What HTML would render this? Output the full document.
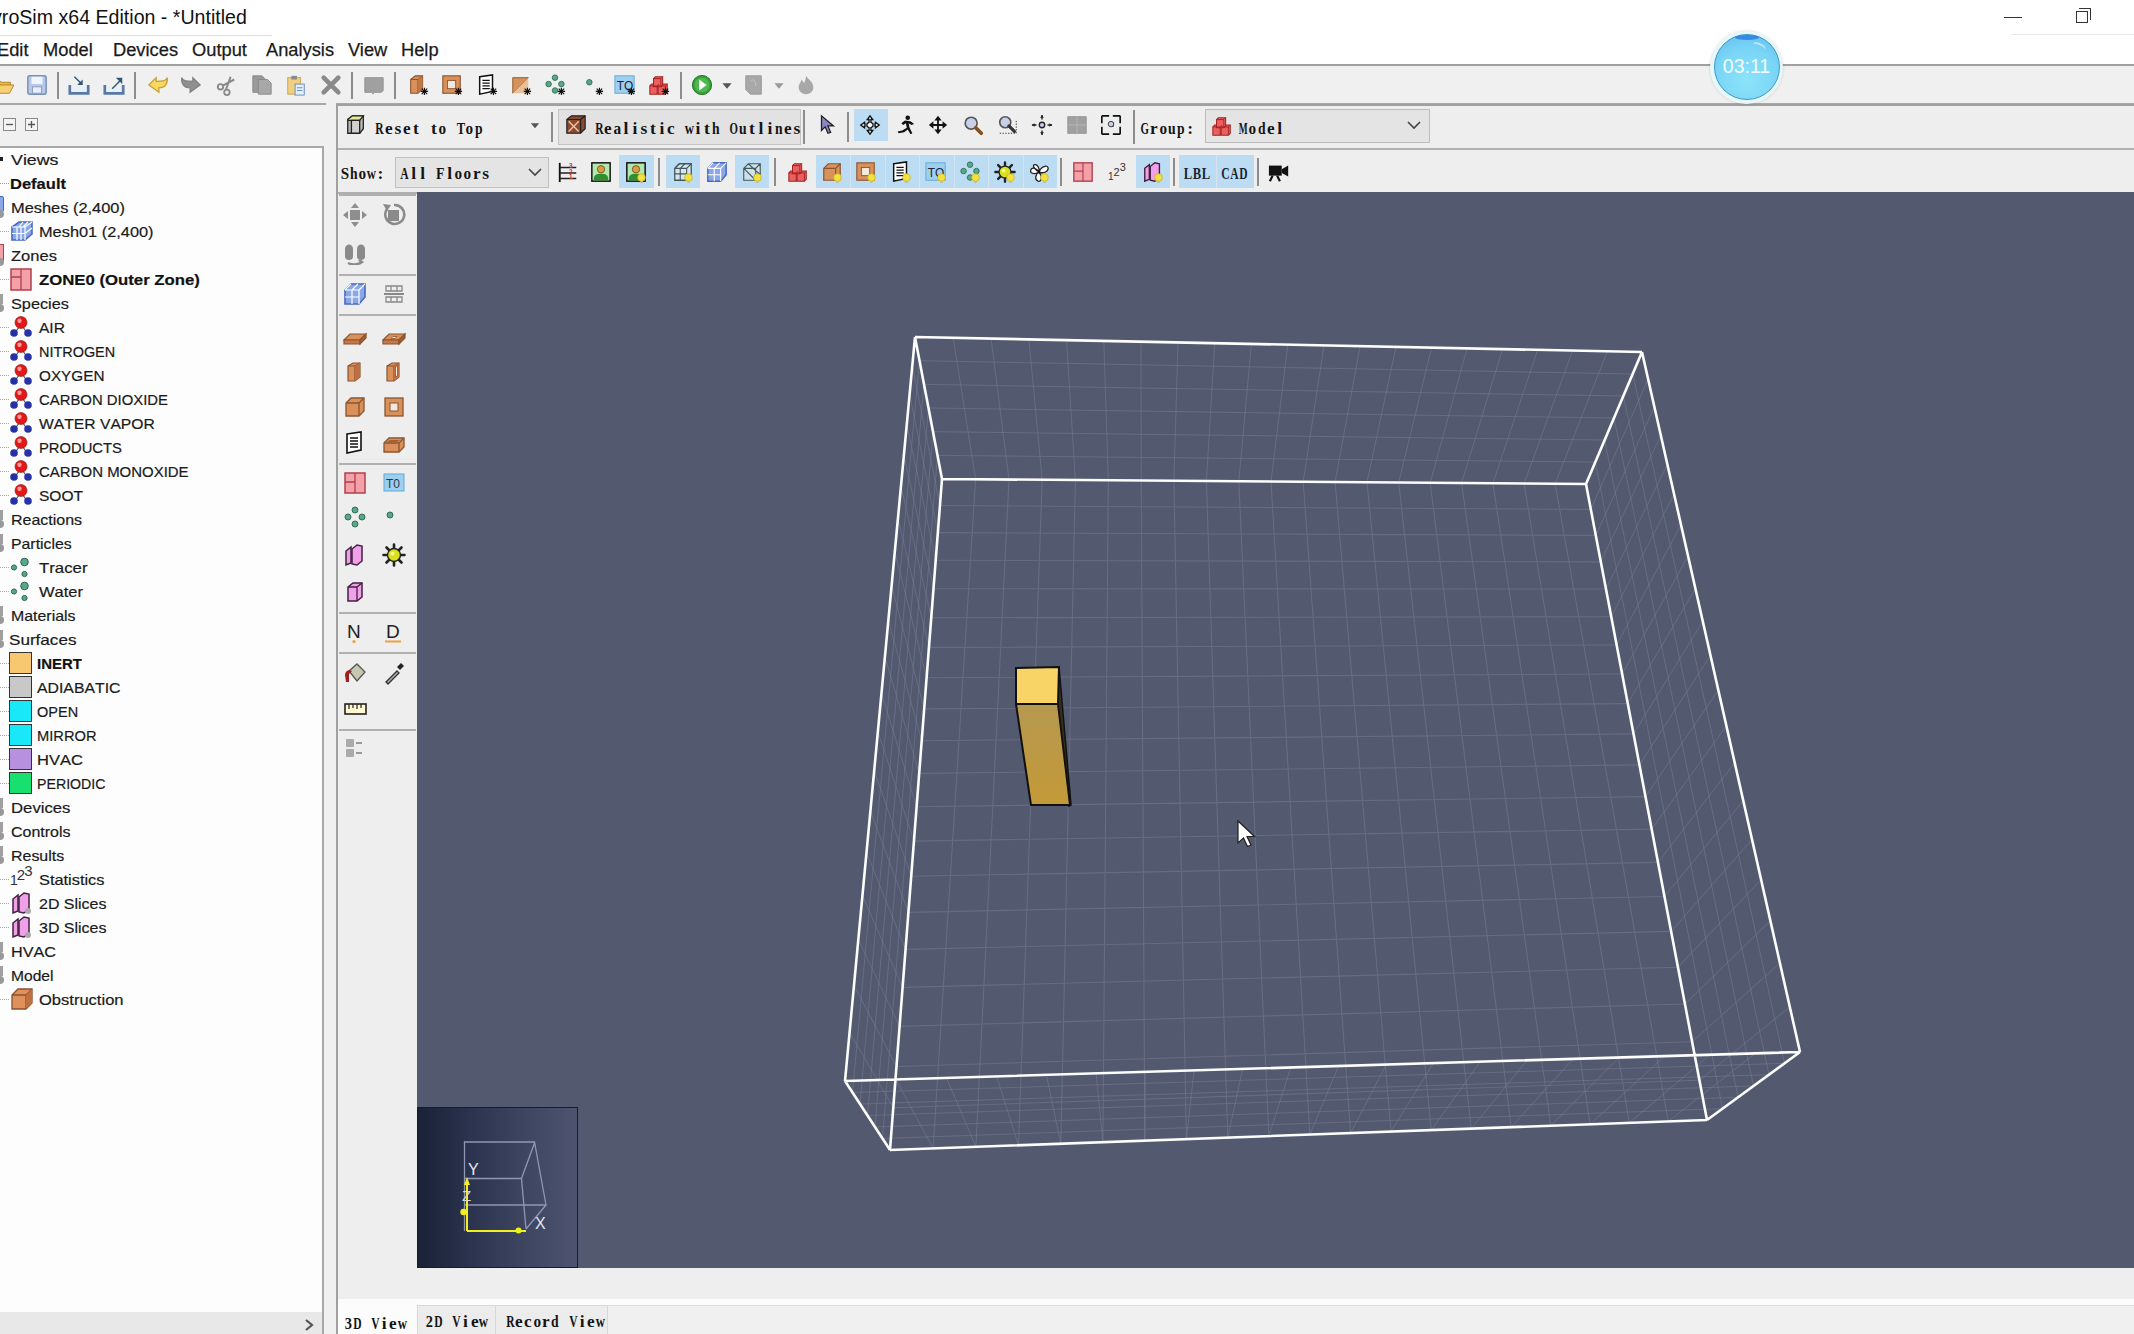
<!DOCTYPE html>
<html><head><meta charset="utf-8">
<style>
*{margin:0;padding:0;box-sizing:border-box}
html,body{width:2134px;height:1334px;overflow:hidden;background:#f0f0f0;font-family:"Liberation Sans",sans-serif;color:#000}
.a{position:absolute}
#title{left:0;top:0;width:2134px;height:35px;background:#fff}
#menu{left:0;top:35px;width:2134px;height:29px;background:#fff}
#tb1{left:0;top:64px;width:2134px;height:41px;background:#f0f0f0;border-top:2px solid #a0a0a0;border-bottom:2px solid #a9a9a9}
.mi{position:absolute;top:39px;font-size:18.3px;color:#1a1a1a;-webkit-text-stroke:0.25px #1a1a1a}
#lp{left:0;top:105px;width:325px;height:1229px;background:#f0f0f0}
#tree{left:0;top:146px;width:324px;height:1166px;background:#fdfdfd;border-top:2px solid #a8a8a8;border-right:2px solid #a8a8a8}
.tr{position:absolute;font-size:15px;color:#1a1a1a;white-space:nowrap;line-height:17px;transform-origin:0 0;font-kerning:none;-webkit-text-stroke:0.2px #1a1a1a}
.b{font-weight:bold;color:#111}
#rp{left:336px;top:104px;width:1798px;height:1230px;background:#eeeeee;border-left:2px solid #a0a0a0;border-top:2px solid #a0a0a0}
#view{left:417px;top:192px;width:1717px;height:1076px;background:#53596f;overflow:hidden}
.sim{font-family:"Liberation Serif",serif;font-weight:bold;font-size:17.5px;line-height:20px;white-space:nowrap}
.sim .c{display:inline-block;width:9px;text-align:center}
.sim i{display:inline-block;font-style:normal;margin:0 -20px}
.tl{font-size:18px;transform:scaleX(0.84);transform-origin:0 0;line-height:20px;margin-top:4px;margin-left:3px}
.mono{font-family:"Liberation Mono",monospace;font-weight:normal;color:#111;white-space:nowrap;-webkit-text-stroke:0.35px #111}
</style></head><body>
<div id="title" class="a">
 <div class="a" style="left:-21px;top:6px;font-size:19.6px;color:#111;white-space:nowrap">PyroSim x64 Edition - *Untitled</div>
 <div class="a" style="left:2004px;top:17px;width:18px;height:1px;background:#333"></div>
 <div class="a" style="left:2076px;top:11px;width:12px;height:12px;border:1px solid #333"></div>
 <div class="a" style="left:2079px;top:8px;width:12px;height:12px;border-top:1px solid #333;border-right:1px solid #333"></div>
 <div class="a" style="left:2012px;top:34px;width:122px;height:1px;background:#e8e8e8"></div>
</div>
<div id="menu" class="a"></div>
<div class="a" style="left:0;top:35px;width:272px;height:1px;background:#e0e0e0"></div>
<div class="mi" style="left:-3px">Edit</div>
<div class="mi" style="left:43px">Model</div>
<div class="mi" style="left:113px">Devices</div>
<div class="mi" style="left:192px">Output</div>
<div class="mi" style="left:266px">Analysis</div>
<div class="mi" style="left:348px">View</div>
<div class="mi" style="left:401px">Help</div>
<div id="tb1" class="a"></div>

<div id="lp" class="a"></div>
<div class="a" style="left:326px;top:102px;width:10px;height:4px;background:#f0f0f0"></div>
<div id="tree" class="a"></div>
<div class="tr" style="left:11px;top:151px;transform:scaleX(1.187)">Views</div>
<div class="a" style="left:0;top:157px;width:3px;height:4px;background:#222"></div>
<div class="tr b" style="left:10px;top:175px;transform:scaleX(1.101)">Default</div>
<div class="a" style="left:0;top:183px;width:9px;border-top:1px dotted #999"></div>
<div class="tr" style="left:11px;top:199px;transform:scaleX(1.093)">Meshes (2,400)</div>
<div class="a" style="left:-6px;top:196px;width:10px;height:16px;background:#8aa8e8;border:1.5px solid #4868c0;border-radius:2px"></div><div class="a" style="left:-4px;top:210px;width:8px;height:8px;border-radius:50%;background:#999"></div>
<div class="tr" style="left:39px;top:223px;transform:scaleX(1.090)">Mesh01 (2,400)</div>
<div class="a" style="left:0;top:231px;width:9px;border-top:1px dotted #aaa"></div>
<svg class="a" style="left:10px;top:219px" width="24" height="23" viewBox="0 0 24 23"><path d="M2 8L9 3L22 3L22 15L15 21L2 21Z" fill="#8aa8e8" stroke="#4868c0" stroke-width="1.6"/><path d="M2 8L15 8L22 3M15 8L15 21M2 14.5L15 14.5L22 9M7 8L7 21M11 8L11 21M6 3L2 6M13 3L9 8M18 3L13 8" stroke="#fff" stroke-width="1.2" fill="none"/></svg>
<div class="tr" style="left:11px;top:247px;transform:scaleX(1.101)">Zones</div>
<div class="a" style="left:-6px;top:244px;width:10px;height:17px;background:#f4a0a8;border:1.5px solid #b04050"></div><div class="a" style="left:-4px;top:258px;width:8px;height:8px;border-radius:50%;background:#999"></div>
<div class="tr b" style="left:39px;top:271px;transform:scaleX(1.116)">ZONE0 (Outer Zone)</div>
<div class="a" style="left:0;top:279px;width:9px;border-top:1px dotted #aaa"></div>
<svg class="a" style="left:10px;top:268px" width="22" height="23" viewBox="0 0 22 23"><rect x="1" y="1" width="20" height="21" fill="#f4a0a8" stroke="#b04050" stroke-width="1.5"/><path d="M11 1V22M1 9H11" stroke="#b04050" stroke-width="1.3"/></svg>
<div class="tr" style="left:11px;top:295px;transform:scaleX(1.085)">Species</div>
<div class="a" style="left:-4px;top:304px;width:8px;height:8px;border-radius:50%;background:#999"></div><div class="a" style="left:0;top:294px;width:3px;height:10px;background:#777;opacity:.7"></div>
<div class="tr" style="left:39px;top:319px;transform:scaleX(1.035)">AIR</div>
<div class="a" style="left:0;top:327px;width:9px;border-top:1px dotted #aaa"></div>
<svg class="a" style="left:9px;top:316px" width="24" height="22" viewBox="0 0 24 22"><path d="M12 8L6 17M12 8L18 17" stroke="#556" stroke-width="1.2"/><circle cx="12" cy="6.5" r="6" fill="#e01818" stroke="#901010" stroke-width=".6"/><circle cx="10.5" cy="4.8" r="2.2" fill="#ff9a9a"/><circle cx="5" cy="17" r="3.8" fill="#2830a8"/><circle cx="19" cy="17" r="3.8" fill="#2830a8"/></svg>
<div class="tr" style="left:39px;top:343px;transform:scaleX(0.962)">NITROGEN</div>
<div class="a" style="left:0;top:351px;width:9px;border-top:1px dotted #aaa"></div>
<svg class="a" style="left:9px;top:340px" width="24" height="22" viewBox="0 0 24 22"><path d="M12 8L6 17M12 8L18 17" stroke="#556" stroke-width="1.2"/><circle cx="12" cy="6.5" r="6" fill="#e01818" stroke="#901010" stroke-width=".6"/><circle cx="10.5" cy="4.8" r="2.2" fill="#ff9a9a"/><circle cx="5" cy="17" r="3.8" fill="#2830a8"/><circle cx="19" cy="17" r="3.8" fill="#2830a8"/></svg>
<div class="tr" style="left:39px;top:367px;transform:scaleX(1.020)">OXYGEN</div>
<div class="a" style="left:0;top:375px;width:9px;border-top:1px dotted #aaa"></div>
<svg class="a" style="left:9px;top:364px" width="24" height="22" viewBox="0 0 24 22"><path d="M12 8L6 17M12 8L18 17" stroke="#556" stroke-width="1.2"/><circle cx="12" cy="6.5" r="6" fill="#e01818" stroke="#901010" stroke-width=".6"/><circle cx="10.5" cy="4.8" r="2.2" fill="#ff9a9a"/><circle cx="5" cy="17" r="3.8" fill="#2830a8"/><circle cx="19" cy="17" r="3.8" fill="#2830a8"/></svg>
<div class="tr" style="left:39px;top:391px;transform:scaleX(0.992)">CARBON DIOXIDE</div>
<div class="a" style="left:0;top:399px;width:9px;border-top:1px dotted #aaa"></div>
<svg class="a" style="left:9px;top:388px" width="24" height="22" viewBox="0 0 24 22"><path d="M12 8L6 17M12 8L18 17" stroke="#556" stroke-width="1.2"/><circle cx="12" cy="6.5" r="6" fill="#e01818" stroke="#901010" stroke-width=".6"/><circle cx="10.5" cy="4.8" r="2.2" fill="#ff9a9a"/><circle cx="5" cy="17" r="3.8" fill="#2830a8"/><circle cx="19" cy="17" r="3.8" fill="#2830a8"/></svg>
<div class="tr" style="left:39px;top:415px;transform:scaleX(1.045)">WATER VAPOR</div>
<div class="a" style="left:0;top:423px;width:9px;border-top:1px dotted #aaa"></div>
<svg class="a" style="left:9px;top:412px" width="24" height="22" viewBox="0 0 24 22"><path d="M12 8L6 17M12 8L18 17" stroke="#556" stroke-width="1.2"/><circle cx="12" cy="6.5" r="6" fill="#e01818" stroke="#901010" stroke-width=".6"/><circle cx="10.5" cy="4.8" r="2.2" fill="#ff9a9a"/><circle cx="5" cy="17" r="3.8" fill="#2830a8"/><circle cx="19" cy="17" r="3.8" fill="#2830a8"/></svg>
<div class="tr" style="left:39px;top:439px;transform:scaleX(0.984)">PRODUCTS</div>
<div class="a" style="left:0;top:447px;width:9px;border-top:1px dotted #aaa"></div>
<svg class="a" style="left:9px;top:436px" width="24" height="22" viewBox="0 0 24 22"><path d="M12 8L6 17M12 8L18 17" stroke="#556" stroke-width="1.2"/><circle cx="12" cy="6.5" r="6" fill="#e01818" stroke="#901010" stroke-width=".6"/><circle cx="10.5" cy="4.8" r="2.2" fill="#ff9a9a"/><circle cx="5" cy="17" r="3.8" fill="#2830a8"/><circle cx="19" cy="17" r="3.8" fill="#2830a8"/></svg>
<div class="tr" style="left:39px;top:463px;transform:scaleX(0.997)">CARBON MONOXIDE</div>
<div class="a" style="left:0;top:471px;width:9px;border-top:1px dotted #aaa"></div>
<svg class="a" style="left:9px;top:460px" width="24" height="22" viewBox="0 0 24 22"><path d="M12 8L6 17M12 8L18 17" stroke="#556" stroke-width="1.2"/><circle cx="12" cy="6.5" r="6" fill="#e01818" stroke="#901010" stroke-width=".6"/><circle cx="10.5" cy="4.8" r="2.2" fill="#ff9a9a"/><circle cx="5" cy="17" r="3.8" fill="#2830a8"/><circle cx="19" cy="17" r="3.8" fill="#2830a8"/></svg>
<div class="tr" style="left:39px;top:487px;transform:scaleX(1.035)">SOOT</div>
<div class="a" style="left:0;top:495px;width:9px;border-top:1px dotted #aaa"></div>
<svg class="a" style="left:9px;top:484px" width="24" height="22" viewBox="0 0 24 22"><path d="M12 8L6 17M12 8L18 17" stroke="#556" stroke-width="1.2"/><circle cx="12" cy="6.5" r="6" fill="#e01818" stroke="#901010" stroke-width=".6"/><circle cx="10.5" cy="4.8" r="2.2" fill="#ff9a9a"/><circle cx="5" cy="17" r="3.8" fill="#2830a8"/><circle cx="19" cy="17" r="3.8" fill="#2830a8"/></svg>
<div class="tr" style="left:11px;top:511px;transform:scaleX(1.066)">Reactions</div>
<div class="a" style="left:-4px;top:520px;width:8px;height:8px;border-radius:50%;background:#999"></div><div class="a" style="left:0;top:510px;width:3px;height:10px;background:#777;opacity:.7"></div>
<div class="tr" style="left:11px;top:535px;transform:scaleX(1.055)">Particles</div>
<div class="a" style="left:-4px;top:544px;width:8px;height:8px;border-radius:50%;background:#999"></div><div class="a" style="left:0;top:534px;width:3px;height:10px;background:#777;opacity:.7"></div>
<div class="tr" style="left:39px;top:559px;transform:scaleX(1.119)">Tracer</div>
<div class="a" style="left:0;top:567px;width:9px;border-top:1px dotted #aaa"></div>
<svg class="a" style="left:8px;top:555px" width="26" height="24" viewBox="0 0 26 24"><circle cx="6" cy="12.5" r="2.6" fill="#58a888" stroke="#306850"/><circle cx="16.5" cy="7" r="3.8" fill="#58a888" stroke="#306850"/><circle cx="16.5" cy="19" r="2.6" fill="#58a888" stroke="#306850"/></svg>
<div class="tr" style="left:39px;top:583px;transform:scaleX(1.100)">Water</div>
<div class="a" style="left:0;top:591px;width:9px;border-top:1px dotted #aaa"></div>
<svg class="a" style="left:8px;top:579px" width="26" height="24" viewBox="0 0 26 24"><circle cx="6" cy="12.5" r="2.6" fill="#58a888" stroke="#306850"/><circle cx="16.5" cy="7" r="3.8" fill="#58a888" stroke="#306850"/><circle cx="16.5" cy="19" r="2.6" fill="#58a888" stroke="#306850"/></svg>
<div class="tr" style="left:11px;top:607px;transform:scaleX(1.060)">Materials</div>
<div class="a" style="left:-4px;top:616px;width:8px;height:8px;border-radius:50%;background:#999"></div><div class="a" style="left:0;top:606px;width:3px;height:10px;background:#777;opacity:.7"></div>
<div class="tr" style="left:9px;top:631px;transform:scaleX(1.140)">Surfaces</div>
<div class="a" style="left:-4px;top:640px;width:8px;height:8px;border-radius:50%;background:#999"></div><div class="a" style="left:0;top:630px;width:3px;height:10px;background:#777;opacity:.7"></div>
<div class="tr b" style="left:37px;top:655px;transform:scaleX(0.996)">INERT</div>
<div class="a" style="left:0;top:663px;width:9px;border-top:1px dotted #aaa"></div>
<div class="a" style="left:9px;top:652px;width:23px;height:22px;background:#f8c870;border:1.5px solid #333"></div>
<div class="tr" style="left:37px;top:679px;transform:scaleX(1.054)">ADIABATIC</div>
<div class="a" style="left:0;top:687px;width:9px;border-top:1px dotted #aaa"></div>
<div class="a" style="left:9px;top:676px;width:23px;height:22px;background:#c8c8c8;border:1.5px solid #333"></div>
<div class="tr" style="left:37px;top:703px;transform:scaleX(0.967)">OPEN</div>
<div class="a" style="left:0;top:711px;width:9px;border-top:1px dotted #aaa"></div>
<div class="a" style="left:9px;top:700px;width:23px;height:22px;background:#18e8f8;border:1.5px solid #333"></div>
<div class="tr" style="left:37px;top:727px;transform:scaleX(0.978)">MIRROR</div>
<div class="a" style="left:0;top:735px;width:9px;border-top:1px dotted #aaa"></div>
<div class="a" style="left:9px;top:724px;width:23px;height:22px;background:#18e8f8;border:1.5px solid #333"></div>
<div class="tr" style="left:37px;top:751px;transform:scaleX(1.103)">HVAC</div>
<div class="a" style="left:0;top:759px;width:9px;border-top:1px dotted #aaa"></div>
<div class="a" style="left:9px;top:748px;width:23px;height:22px;background:#b890e0;border:1.5px solid #333"></div>
<div class="tr" style="left:37px;top:775px;transform:scaleX(0.945)">PERIODIC</div>
<div class="a" style="left:0;top:783px;width:9px;border-top:1px dotted #aaa"></div>
<div class="a" style="left:9px;top:772px;width:23px;height:22px;background:#18e070;border:1.5px solid #333"></div>
<div class="tr" style="left:11px;top:799px;transform:scaleX(1.115)">Devices</div>
<div class="a" style="left:-4px;top:808px;width:8px;height:8px;border-radius:50%;background:#999"></div><div class="a" style="left:0;top:798px;width:3px;height:10px;background:#777;opacity:.7"></div>
<div class="tr" style="left:11px;top:823px;transform:scaleX(1.065)">Controls</div>
<div class="a" style="left:-4px;top:832px;width:8px;height:8px;border-radius:50%;background:#999"></div><div class="a" style="left:0;top:822px;width:3px;height:10px;background:#777;opacity:.7"></div>
<div class="tr" style="left:11px;top:847px;transform:scaleX(1.063)">Results</div>
<div class="a" style="left:-4px;top:856px;width:8px;height:8px;border-radius:50%;background:#999"></div><div class="a" style="left:0;top:846px;width:3px;height:10px;background:#777;opacity:.7"></div>
<div class="tr" style="left:39px;top:871px;transform:scaleX(1.091)">Statistics</div>
<div class="a" style="left:0;top:879px;width:9px;border-top:1px dotted #aaa"></div>
<div class="a" style="left:10px;top:866px;font-size:15px;color:#333;letter-spacing:-1px;white-space:nowrap"><span style="font-size:14px;position:relative;top:5px">1</span><span>2</span><span style="position:relative;top:-4px">3</span></div>
<div class="tr" style="left:39px;top:895px;transform:scaleX(1.065)">2D Slices</div>
<div class="a" style="left:0;top:903px;width:9px;border-top:1px dotted #aaa"></div>
<svg class="a" style="left:10px;top:891px" width="24" height="24" viewBox="0 0 24 24"><path d="M3 8L8 4L8 20L3 22Z" fill="#f0a0e8" stroke="#402040" stroke-width="1.5"/><path d="M9 6L14 2L19 3L19 18L14 22L9 21Z" fill="#f0a0e8" stroke="#402040" stroke-width="1.5"/><circle cx="18" cy="20" r="3" fill="#aaa"/></svg>
<div class="tr" style="left:39px;top:919px;transform:scaleX(1.065)">3D Slices</div>
<div class="a" style="left:0;top:927px;width:9px;border-top:1px dotted #aaa"></div>
<svg class="a" style="left:10px;top:915px" width="24" height="24" viewBox="0 0 24 24"><path d="M3 8L8 4L8 20L3 22Z" fill="#f0a0e8" stroke="#402040" stroke-width="1.5"/><path d="M9 6L14 2L19 3L19 18L14 22L9 21Z" fill="#f0a0e8" stroke="#402040" stroke-width="1.5"/><circle cx="18" cy="20" r="3" fill="#aaa"/></svg>
<div class="tr" style="left:11px;top:943px;transform:scaleX(1.079)">HVAC</div>
<div class="a" style="left:-4px;top:952px;width:8px;height:8px;border-radius:50%;background:#999"></div><div class="a" style="left:0;top:942px;width:3px;height:10px;background:#777;opacity:.7"></div>
<div class="tr" style="left:11px;top:967px;transform:scaleX(1.040)">Model</div>
<div class="a" style="left:-4px;top:976px;width:8px;height:8px;border-radius:50%;background:#999"></div><div class="a" style="left:0;top:966px;width:3px;height:10px;background:#777;opacity:.7"></div>
<div class="tr" style="left:39px;top:991px;transform:scaleX(1.102)">Obstruction</div>
<div class="a" style="left:0;top:999px;width:9px;border-top:1px dotted #aaa"></div>
<svg class="a" style="left:10px;top:987px" width="24" height="24" viewBox="0 0 24 24"><path d="M2 8L8 2L22 2L22 16L16 22L2 22Z" fill="#e0905a" stroke="#8a5030" stroke-width="1.3"/><path d="M2 8L16 8L22 2M16 8L16 22" stroke="#8a5030" stroke-width="1.3" fill="none"/><path d="M16 8L22 2L22 16L16 22Z" fill="#c07040"/></svg>

<div id="rp" class="a"></div>
<div class="a" style="left:338px;top:148px;width:1796px;height:2px;background:#b0b0b0"></div>
<div class="a" style="left:338px;top:192px;width:79px;height:2px;background:#b0b0b0"></div>
<svg class="a" style="left:-8.0px;top:74.0px" width="22" height="22" viewBox="0 0 24 24"><path d="M1 7h7l2 2h10v4H6L1 21Z" fill="#e8b848" stroke="#b08020"/><path d="M1 21L6 12h18l-5 9Z" fill="#f8d070" stroke="#b08020"/></svg>
<svg class="a" style="left:26.0px;top:74.0px" width="22" height="22" viewBox="0 0 24 24"><rect x="2" y="2" width="20" height="20" rx="2" fill="#b8c8e8" stroke="#7890b8" stroke-width="1.6"/><rect x="6" y="3" width="12" height="8" fill="#eef4fb"/><rect x="7" y="14" width="10" height="7" fill="#e8eef8" stroke="#8898b8"/></svg>
<svg class="a" style="left:68.0px;top:74.0px" width="22" height="22" viewBox="0 0 24 24"><path d="M2 12v9h20v-9" fill="none" stroke="#5878a8" stroke-width="3"/><path d="M4 14v5h16v-5" fill="#e8f0f8" stroke="none"/><path d="M7 3l8 8" stroke="#305878" stroke-width="1.6"/><path d="M16 6v6h-6z" fill="#305878"/></svg>
<svg class="a" style="left:103.0px;top:74.0px" width="22" height="22" viewBox="0 0 24 24"><path d="M2 12v9h20v-9" fill="none" stroke="#5878a8" stroke-width="3"/><path d="M4 14v5h16v-5" fill="#e8f0f8" stroke="none"/><path d="M10 16l9-9" stroke="#305878" stroke-width="1.6"/><path d="M21 4v7l-7-7z" fill="#305878"/></svg>
<svg class="a" style="left:147.0px;top:74.0px" width="22" height="22" viewBox="0 0 24 24"><path d="M2 12L10 4v4c6 0 11 0 12 -4c1 6-2 11-9 11v5Z" fill="#f8d860" stroke="#c0a030" stroke-width="1.3"/></svg>
<svg class="a" style="left:180.0px;top:74.0px" width="22" height="22" viewBox="0 0 24 24"><path d="M22 12L14 4v4C8 8 3 8 2 4c-1 6 2 11 9 11v5Z" fill="#909090" stroke="#808080" stroke-width="1.3"/></svg>
<svg class="a" style="left:215.0px;top:74.0px" width="22" height="22" viewBox="0 0 24 24"><circle cx="6" cy="14" r="3" fill="none" stroke="#8a8a8a" stroke-width="2"/><circle cx="13" cy="20" r="3" fill="none" stroke="#8a8a8a" stroke-width="2"/><path d="M8 13L21 6M12 17L17 3" stroke="#8a8a8a" stroke-width="2.2"/></svg>
<svg class="a" style="left:251.0px;top:74.0px" width="22" height="22" viewBox="0 0 24 24"><path d="M2 2h10l3 3v15H2Z" fill="#9a9a9a" stroke="#888"/><path d="M8 6h10l4 4v12H8Z" fill="#a8a8a8" stroke="#888"/></svg>
<svg class="a" style="left:285.0px;top:74.0px" width="22" height="22" viewBox="0 0 24 24"><rect x="3" y="4" width="14" height="18" fill="#f0d080" stroke="#c8a050"/><path d="M7 2h6v4H7z" fill="#888"/><rect x="11" y="11" width="10" height="12" fill="#e0f0ff" stroke="#6888b0"/><path d="M13 15h6M13 18h6" stroke="#6888b0"/></svg>
<svg class="a" style="left:320.0px;top:74.0px" width="22" height="22" viewBox="0 0 24 24"><path d="M4 4L20 20M20 4L4 20" stroke="#8a8a8a" stroke-width="5" stroke-linecap="round"/></svg>
<svg class="a" style="left:363.0px;top:74.0px" width="22" height="22" viewBox="0 0 24 24"><path d="M2 4h20v14l-2 2H12l-1 2-1-2H2Z" fill="#a0a0a0" stroke="#909090"/></svg>
<svg class="a" style="left:407.0px;top:74.0px" width="22" height="22" viewBox="0 0 24 24"><path d="M4 6L9 2h8v14l-5 5H4Z" fill="#d9905a" stroke="#8a5530" stroke-width="1.2"/><path d="M4 6h8v15M12 6l5-4" stroke="#8a5530" fill="none" stroke-width="1.2"/><path d="M12 6l5-4v14l-5 5z" fill="#c07848"/><g stroke="#111" stroke-width="1.3"><path d="M15 19H23M19 15V23M16 16L22 22M16 22L22 16"/></g></svg>
<svg class="a" style="left:441.0px;top:74.0px" width="22" height="22" viewBox="0 0 24 24"><rect x="2" y="2" width="19" height="19" fill="#d9905a" stroke="#8a5530" stroke-width="1.2"/><rect x="7" y="7" width="9" height="9" fill="#f4e8dc" stroke="#8a5530"/><g stroke="#111" stroke-width="1.3"><path d="M15 19H23M19 15V23M16 16L22 22M16 22L22 16"/></g></svg>
<svg class="a" style="left:476.0px;top:74.0px" width="22" height="22" viewBox="0 0 24 24"><path d="M4 3l14-2v18l-14 3Z" fill="#fff" stroke="#111" stroke-width="1.6"/><path d="M7 7h8M7 10h8M7 13h8M7 16h8" stroke="#111" stroke-width="1.3"/><g stroke="#111" stroke-width="1.3"><path d="M15 19H23M19 15V23M16 16L22 22M16 22L22 16"/></g></svg>
<svg class="a" style="left:510.0px;top:74.0px" width="22" height="22" viewBox="0 0 24 24"><path d="M3 21L3 4h17Z" fill="#d9905a" stroke="#8a5530"/><path d="M3 21L20 4v17Z" fill="#e8c098"/><g stroke="#111" stroke-width="1.3"><path d="M15 19H23M19 15V23M16 16L22 22M16 22L22 16"/></g></svg>
<svg class="a" style="left:544.0px;top:74.0px" width="22" height="22" viewBox="0 0 24 24"><g fill="#58a888" stroke="#307058"><circle cx="12" cy="4" r="3"/><circle cx="5" cy="11" r="3"/><circle cx="19" cy="11" r="3"/><circle cx="12" cy="18" r="3"/></g><g stroke="#111" stroke-width="1.3"><path d="M15 19H23M19 15V23M16 16L22 22M16 22L22 16"/></g></svg>
<svg class="a" style="left:582.0px;top:74.0px" width="22" height="22" viewBox="0 0 24 24"><circle cx="8" cy="9" r="3" fill="#58a888" stroke="#307058"/><g stroke="#111" stroke-width="1.3"><path d="M15 19H23M19 15V23M16 16L22 22M16 22L22 16"/></g></svg>
<svg class="a" style="left:614.0px;top:74.0px" width="22" height="22" viewBox="0 0 24 24"><rect x="1" y="2" width="21" height="19" fill="#9cd0ee" stroke="#60a8d8"/><text x="3" y="17" font-family="Liberation Sans" font-size="13" fill="#223">TQ</text><g stroke="#111" stroke-width="1.3"><path d="M15 19H23M19 15V23M16 16L22 22M16 22L22 16"/></g></svg>
<svg class="a" style="left:648.0px;top:74.0px" width="22" height="22" viewBox="0 0 24 24"><g fill="#e86060" stroke="#a82020" stroke-width="1.1"><path d="M2 13l2-2h8v9l-2 2H2z"/><path d="M11 13l2-2h8v9l-2 2h-8z"/><path d="M6 5l2-2h8v9l-2 2H6z"/></g><g stroke="#a82020" stroke-width="1" fill="none"><path d="M2 13h8v9M10 13l2-2M11 13h8v9M19 13l2-2M6 5h8v9M14 5l2-2"/></g><g stroke="#111" stroke-width="1.3"><path d="M15 19H23M19 15V23M16 16L22 22M16 22L22 16"/></g></svg>
<svg class="a" style="left:691.0px;top:74.0px" width="22" height="22" viewBox="0 0 24 24"><circle cx="12" cy="12" r="10.5" fill="#38a038" stroke="#207020"/><circle cx="12" cy="12" r="8" fill="#50b850"/><path d="M9 6L17 12L9 18Z" fill="#fff"/></svg>
<svg class="a" style="left:716.0px;top:74.0px" width="22" height="22" viewBox="0 0 24 24"><path d="M7 10h10l-5 6z" fill="#555"/></svg>
<svg class="a" style="left:743.0px;top:74.0px" width="22" height="22" viewBox="0 0 24 24"><path d="M3 2h17v20H8L3 17Z" fill="#a8a8a8" stroke="#989898"/><path d="M9 7c3-2 5 2 5 6" stroke="#c8c8c8" fill="none"/></svg>
<svg class="a" style="left:768.0px;top:74.0px" width="22" height="22" viewBox="0 0 24 24"><path d="M7 10h10l-5 6z" fill="#999"/></svg>
<svg class="a" style="left:795.0px;top:74.0px" width="22" height="22" viewBox="0 0 24 24"><path d="M12 2c2 4 8 6 8 13a8 7 0 0 1-16 0c0-5 3-6 3-9 2 2 2 3 3 4 1-3 2-5 2-8z" fill="#a8a8a8"/></svg>
<div class="a" style="left:57px;top:72px;width:1.6px;height:27px;background:#8c8c8c"></div>
<div class="a" style="left:134px;top:72px;width:1.6px;height:27px;background:#8c8c8c"></div>
<div class="a" style="left:351px;top:72px;width:1.6px;height:27px;background:#8c8c8c"></div>
<div class="a" style="left:394px;top:72px;width:1.6px;height:27px;background:#8c8c8c"></div>
<div class="a" style="left:680px;top:72px;width:1.6px;height:27px;background:#8c8c8c"></div>
<svg class="a" style="left:345.0px;top:114.0px" width="22" height="22" viewBox="0 0 24 24"><path d="M3 6L8 2h12v14l-4 5H3Z" fill="#b8b8b8" stroke="#222" stroke-width="1.4"/><path d="M3 6L8 2h12l-4 5H3z" fill="#e8e898" stroke="#222" stroke-width="1.4"/><path d="M7 7h9v14H7z" fill="#d0d0d0" stroke="#222" stroke-width="1.4"/></svg>
<div class="a sim" style="left:375.3px;top:118px;color:#141414"><span class="c"><i style="transform:scaleX(0.66)">R</i></span><span class="c"><i style="transform:scaleX(0.98)">e</i></span><span class="c"><i style="transform:scaleX(1.00)">s</i></span><span class="c"><i style="transform:scaleX(0.98)">e</i></span><span class="c"><i style="transform:scaleX(1.00)">t</i></span><span class="c">&nbsp;</span><span class="c"><i style="transform:scaleX(1.00)">t</i></span><span class="c"><i style="transform:scaleX(0.87)">o</i></span><span class="c">&nbsp;</span><span class="c"><i style="transform:scaleX(0.72)">T</i></span><span class="c"><i style="transform:scaleX(0.87)">o</i></span><span class="c"><i style="transform:scaleX(0.78)">p</i></span></div>
<svg class="a" style="left:525.0px;top:115.0px" width="20" height="20" viewBox="0 0 24 24"><path d="M7 10h10l-5 6z" fill="#555"/></svg>
<div class="a" style="left:551px;top:112px;width:1.6px;height:30px;background:#8c8c8c"></div>
<div class="a" style="left:558px;top:109px;width:243px;height:36px;background:#e2e2e2;border:1px solid #c4c4c4"></div>
<svg class="a" style="left:565.0px;top:114.0px" width="22" height="22" viewBox="0 0 24 24"><path d="M2 6L7 2h15v14l-5 5H2Z" fill="#8a4a30" stroke="#222" stroke-width="1.3"/><path d="M2 6h15v15M17 6l5-4" stroke="#222" fill="none" stroke-width="1.3"/><path d="M4 8l11 11M15 8L4 19" stroke="#f0c0a0" stroke-width="1.6"/></svg>
<div class="a sim" style="left:594.4px;top:118px;color:#141414"><span class="c"><i style="transform:scaleX(0.66)">R</i></span><span class="c"><i style="transform:scaleX(0.98)">e</i></span><span class="c"><i style="transform:scaleX(0.87)">a</i></span><span class="c"><i style="transform:scaleX(1.00)">l</i></span><span class="c"><i style="transform:scaleX(1.00)">i</i></span><span class="c"><i style="transform:scaleX(1.00)">s</i></span><span class="c"><i style="transform:scaleX(1.00)">t</i></span><span class="c"><i style="transform:scaleX(1.00)">i</i></span><span class="c"><i style="transform:scaleX(0.98)">c</i></span><span class="c">&nbsp;</span><span class="c"><i style="transform:scaleX(0.73)">w</i></span><span class="c"><i style="transform:scaleX(1.00)">i</i></span><span class="c"><i style="transform:scaleX(1.00)">t</i></span><span class="c"><i style="transform:scaleX(0.78)">h</i></span><span class="c">&nbsp;</span><span class="c"><i style="transform:scaleX(0.62)">O</i></span><span class="c"><i style="transform:scaleX(0.78)">u</i></span><span class="c"><i style="transform:scaleX(1.00)">t</i></span><span class="c"><i style="transform:scaleX(1.00)">l</i></span><span class="c"><i style="transform:scaleX(1.00)">i</i></span><span class="c"><i style="transform:scaleX(0.78)">n</i></span><span class="c"><i style="transform:scaleX(0.98)">e</i></span><span class="c"><i style="transform:scaleX(1.00)">s</i></span></div>
<div class="a" style="left:803px;top:110px;width:1.6px;height:34px;background:#8c8c8c"></div>
<svg class="a" style="left:816.0px;top:114.0px" width="22" height="22" viewBox="0 0 24 24"><path d="M6 2v16l4-4 3 7 3-1-3-7h6Z" fill="#8888c0" stroke="#222" stroke-width="1.4"/></svg>
<div class="a" style="left:847px;top:112px;width:1.6px;height:30px;background:#8c8c8c"></div>
<div class="a" style="left:854px;top:109px;width:34px;height:32px;background:#bcdcf4"></div>
<svg class="a" style="left:859.0px;top:114.0px" width="22" height="22" viewBox="0 0 24 24"><path d="M12 2l3 4h-2v3a4 4 0 0 1 2 2h3V9l4 3-4 3v-2h-3a4 4 0 0 1-2 2v3h2l-3 4-3-4h2v-3a4 4 0 0 1-2-2H6v2l-4-3 4-3v2h3a4 4 0 0 1 2-2V6H9Z" fill="#fff" stroke="#111" stroke-width="1.5"/></svg>
<svg class="a" style="left:894.0px;top:114.0px" width="22" height="22" viewBox="0 0 24 24"><circle cx="15" cy="4" r="2.5" fill="#111"/><path d="M12 7l-4 3 2 2 3-2 1 5-5 3-5 1 1 2 6-1 4-3 3 5 2-1-3-6-1-5 3 2 3-1-4-3z" fill="#111"/></svg>
<svg class="a" style="left:927.0px;top:114.0px" width="22" height="22" viewBox="0 0 24 24"><path d="M12 2l4 5h-3v4h4V8l5 4-5 4v-3h-4v4h3l-4 5-4-5h3v-4H7v3l-5-4 5-4v3h4V7H8Z" fill="#111"/></svg>
<svg class="a" style="left:962.0px;top:114.0px" width="22" height="22" viewBox="0 0 24 24"><circle cx="10" cy="10" r="6.5" fill="#c8d0e8" stroke="#555" stroke-width="1.8"/><path d="M15 15l6 6" stroke="#805020" stroke-width="4" stroke-linecap="round"/></svg>
<svg class="a" style="left:997.0px;top:114.0px" width="22" height="22" viewBox="0 0 24 24"><path d="M3 21h18V6" stroke="#333" stroke-dasharray="1.5 1.5" fill="none"/><circle cx="9" cy="9" r="6" fill="#c8d0e8" stroke="#555" stroke-width="1.8"/><path d="M13 13l6 6" stroke="#333" stroke-width="3.5" stroke-linecap="round"/></svg>
<svg class="a" style="left:1031.0px;top:114.0px" width="22" height="22" viewBox="0 0 24 24"><path d="M12 1v5M12 18v5M1 12h5M18 12h5" stroke="#222" stroke-width="1.5"/><path d="M12 1l-2 3h4zM12 23l-2-3h4zM1 12l3-2v4zM23 12l-3-2v4z" fill="#222"/><circle cx="12" cy="12" r="3" fill="#c8c8e8" stroke="#222" stroke-width="1.4"/></svg>
<svg class="a" style="left:1066.0px;top:114.0px" width="22" height="22" viewBox="0 0 24 24"><rect x="2" y="3" width="20" height="18" fill="#a0a0a0" stroke="#909090"/><path d="M12 3v18M2 12h20" stroke="#b8b8b8"/></svg>
<svg class="a" style="left:1100.0px;top:114.0px" width="22" height="22" viewBox="0 0 24 24"><path d="M2 2h8M2 2v8M22 2h-8M22 2v8M2 22h8M2 22v-8M22 22h-8M22 22v-8M10 10h4v4" stroke="#111" stroke-width="1.8" fill="none"/><circle cx="12" cy="11" r="3" fill="#c8d0e8" stroke="#333"/></svg>
<div class="a" style="left:1133px;top:110px;width:1.6px;height:34px;background:#8c8c8c"></div>
<div class="a sim" style="left:1140.6px;top:118px;color:#141414"><span class="c"><i style="transform:scaleX(0.62)">G</i></span><span class="c"><i style="transform:scaleX(0.98)">r</i></span><span class="c"><i style="transform:scaleX(0.87)">o</i></span><span class="c"><i style="transform:scaleX(0.78)">u</i></span><span class="c"><i style="transform:scaleX(0.78)">p</i></span><span class="c"><i style="transform:scaleX(1.00)">:</i></span></div>
<div class="a" style="left:1205px;top:109px;width:225px;height:34px;background:#e4e4e4;border:1px solid #bcbcbc"></div>
<svg class="a" style="left:1211.0px;top:115.0px" width="22" height="22" viewBox="0 0 24 24"><g fill="#e86060" stroke="#a82020" stroke-width="1.1"><path d="M2 13l2-2h8v9l-2 2H2z"/><path d="M11 13l2-2h8v9l-2 2h-8z"/><path d="M6 5l2-2h8v9l-2 2H6z"/></g><g stroke="#a82020" stroke-width="1" fill="none"><path d="M2 13h8v9M10 13l2-2M11 13h8v9M19 13l2-2M6 5h8v9M14 5l2-2"/></g></svg>
<div class="a sim" style="left:1239.1px;top:118px;color:#141414"><span class="c"><i style="transform:scaleX(0.54)">M</i></span><span class="c"><i style="transform:scaleX(0.87)">o</i></span><span class="c"><i style="transform:scaleX(0.78)">d</i></span><span class="c"><i style="transform:scaleX(0.98)">e</i></span><span class="c"><i style="transform:scaleX(1.00)">l</i></span></div>
<svg class="a" style="left:1407px;top:120px" width="15" height="10"><path d="M1 2l6 6 6-6" stroke="#444" stroke-width="1.6" fill="none"/></svg>
<div class="a sim" style="left:339.9px;top:162.7px;color:#141414"><span class="c"><i style="transform:scaleX(0.86)">S</i></span><span class="c"><i style="transform:scaleX(0.78)">h</i></span><span class="c"><i style="transform:scaleX(0.87)">o</i></span><span class="c"><i style="transform:scaleX(0.73)">w</i></span><span class="c"><i style="transform:scaleX(1.00)">:</i></span></div>
<div class="a" style="left:395px;top:157px;width:154px;height:31px;background:#e4e4e4;border:1px solid #c0c0c0"></div>
<div class="a sim" style="left:400.1px;top:162.7px;color:#141414"><span class="c"><i style="transform:scaleX(0.66)">A</i></span><span class="c"><i style="transform:scaleX(1.00)">l</i></span><span class="c"><i style="transform:scaleX(1.00)">l</i></span><span class="c">&nbsp;</span><span class="c"><i style="transform:scaleX(0.79)">F</i></span><span class="c"><i style="transform:scaleX(1.00)">l</i></span><span class="c"><i style="transform:scaleX(0.87)">o</i></span><span class="c"><i style="transform:scaleX(0.87)">o</i></span><span class="c"><i style="transform:scaleX(0.98)">r</i></span><span class="c"><i style="transform:scaleX(1.00)">s</i></span></div>
<svg class="a" style="left:528px;top:167px" width="15" height="10"><path d="M1 2l6 6 6-6" stroke="#444" stroke-width="1.6" fill="none"/></svg>
<div class="a" style="left:619px;top:155px;width:35px;height:33px;background:#bcdcf4"></div>
<div class="a" style="left:666px;top:155px;width:34px;height:33px;background:#bcdcf4"></div>
<div class="a" style="left:735px;top:155px;width:34px;height:33px;background:#bcdcf4"></div>
<div class="a" style="left:816px;top:155px;width:241px;height:33px;background:#bcdcf4"></div>
<div class="a" style="left:1136px;top:155px;width:34px;height:33px;background:#bcdcf4"></div>
<div class="a" style="left:1179px;top:155px;width:75px;height:33px;background:#bcdcf4"></div>
<div class="a" style="left:850px;top:155px;width:1px;height:33px;background:#d4e4f0"></div>
<div class="a" style="left:885px;top:155px;width:1px;height:33px;background:#d4e4f0"></div>
<div class="a" style="left:919px;top:155px;width:1px;height:33px;background:#d4e4f0"></div>
<div class="a" style="left:954px;top:155px;width:1px;height:33px;background:#d4e4f0"></div>
<div class="a" style="left:988px;top:155px;width:1px;height:33px;background:#d4e4f0"></div>
<div class="a" style="left:1023px;top:155px;width:1px;height:33px;background:#d4e4f0"></div>
<div class="a" style="left:1216px;top:155px;width:1px;height:33px;background:#d4e4f0"></div>
<div class="a" style="left:658px;top:158px;width:1.6px;height:28px;background:#8c8c8c"></div>
<div class="a" style="left:774px;top:158px;width:1.6px;height:28px;background:#8c8c8c"></div>
<div class="a" style="left:1060px;top:158px;width:1.6px;height:28px;background:#8c8c8c"></div>
<div class="a" style="left:1173px;top:158px;width:1.6px;height:28px;background:#8c8c8c"></div>
<div class="a" style="left:1257px;top:158px;width:1.6px;height:28px;background:#8c8c8c"></div>
<svg class="a" style="left:557.0px;top:161.0px" width="22" height="22" viewBox="0 0 24 24"><path d="M3 2v21" stroke="#111" stroke-width="2"/><path d="M3 7h18M3 13h18M3 19h18" stroke="#222" stroke-width="1.6"/><text x="13" y="8" font-size="7" fill="#c03030" font-family="Liberation Sans" font-weight="bold">3</text><text x="13" y="14" font-size="7" fill="#c03030" font-family="Liberation Sans" font-weight="bold">2</text><text x="13" y="20" font-size="7" fill="#c03030" font-family="Liberation Sans" font-weight="bold">1</text></svg>
<svg class="a" style="left:590.0px;top:161.0px" width="22" height="22" viewBox="0 0 24 24"><rect x="2" y="2" width="20" height="20" fill="#b0e8b0" stroke="#111" stroke-width="1.6"/><circle cx="12" cy="9" r="4" fill="#d8a040" stroke="#805020"/><path d="M4 21c0-6 3-7 8-7s8 1 8 7Z" fill="#309030"/></svg>
<svg class="a" style="left:625.0px;top:161.0px" width="22" height="22" viewBox="0 0 24 24"><rect x="2" y="2" width="20" height="20" fill="#b0e8b0" stroke="#111" stroke-width="1.6"/><circle cx="12" cy="9" r="4" fill="#d8a040" stroke="#805020"/><path d="M4 21c0-6 3-7 8-7s8 1 8 7Z" fill="#309030"/><circle cx="18" cy="18" r="4.2" fill="#f0e040" stroke="#c8b020" stroke-width=".8"/><path d="M16.5 22h3v2h-3z" fill="#bbb"/></svg>
<svg class="a" style="left:672.0px;top:161.0px" width="22" height="22" viewBox="0 0 24 24"><path d="M3 8L8 3h13v12l-5 6H3Z" fill="#d8e4f0" stroke="#405858" stroke-width="1.4"/><path d="M3 8h13v13M16 8l5-5M3 14h13M9 8v13M8 3L3 8M14 3l-5 5" stroke="#405858" stroke-width="1.2" fill="none"/><circle cx="18" cy="18" r="4.2" fill="#f0e040" stroke="#c8b020" stroke-width=".8"/><path d="M16.5 22h3v2h-3z" fill="#bbb"/></svg>
<svg class="a" style="left:706.0px;top:161.0px" width="22" height="22" viewBox="0 0 24 24"><path d="M2 8L8 2h14v13l-6 7H2Z" fill="#8aa8e8" stroke="#4868c0" stroke-width="1.6"/><path d="M2 8h14v14M16 8l6-6M2 15h14M9 8v14M8 2L2 8M15 2l-6 6" stroke="#fff" stroke-width="1.2" fill="none"/></svg>
<svg class="a" style="left:741.0px;top:161.0px" width="22" height="22" viewBox="0 0 24 24"><path d="M3 8L8 3h13v12l-5 6H3ZM3 8h13v13M16 8l5-5M3 8l13 13M8 3l13 12" stroke="#405858" stroke-width="1.2" fill="#cfe0ec"/><circle cx="18" cy="18" r="4.2" fill="#f0e040" stroke="#c8b020" stroke-width=".8"/><path d="M16.5 22h3v2h-3z" fill="#bbb"/></svg>
<svg class="a" style="left:787.0px;top:161.0px" width="22" height="22" viewBox="0 0 24 24"><g fill="#e86060" stroke="#a82020" stroke-width="1.1"><path d="M2 13l2-2h8v9l-2 2H2z"/><path d="M11 13l2-2h8v9l-2 2h-8z"/><path d="M6 5l2-2h8v9l-2 2H6z"/></g><g stroke="#a82020" stroke-width="1" fill="none"><path d="M2 13h8v9M10 13l2-2M11 13h8v9M19 13l2-2M6 5h8v9M14 5l2-2"/></g></svg>
<svg class="a" style="left:821.0px;top:161.0px" width="22" height="22" viewBox="0 0 24 24"><path d="M3 8L8 3h13v13l-5 5H3Z" fill="#d9905a" stroke="#8a5530" stroke-width="1.3"/><path d="M3 8h13v13M16 8l5-5" stroke="#8a5530" fill="none" stroke-width="1.3"/><circle cx="18" cy="18" r="4.2" fill="#f0e040" stroke="#c8b020" stroke-width=".8"/><path d="M16.5 22h3v2h-3z" fill="#bbb"/></svg>
<svg class="a" style="left:855.0px;top:161.0px" width="22" height="22" viewBox="0 0 24 24"><rect x="2" y="2" width="19" height="19" fill="#d9905a" stroke="#8a5530" stroke-width="1.2"/><rect x="7" y="7" width="9" height="9" fill="#f4e8dc" stroke="#8a5530"/><circle cx="18" cy="18" r="4.2" fill="#f0e040" stroke="#c8b020" stroke-width=".8"/><path d="M16.5 22h3v2h-3z" fill="#bbb"/></svg>
<svg class="a" style="left:890.0px;top:161.0px" width="22" height="22" viewBox="0 0 24 24"><path d="M4 3l14-2v18l-14 3Z" fill="#fff" stroke="#111" stroke-width="1.6"/><path d="M7 7h8M7 10h8M7 13h8M7 16h8" stroke="#111" stroke-width="1.3"/><circle cx="18" cy="18" r="4.2" fill="#f0e040" stroke="#c8b020" stroke-width=".8"/><path d="M16.5 22h3v2h-3z" fill="#bbb"/></svg>
<svg class="a" style="left:925.0px;top:161.0px" width="22" height="22" viewBox="0 0 24 24"><rect x="1" y="2" width="21" height="19" fill="#9cd0ee" stroke="#60a8d8"/><text x="3" y="17" font-family="Liberation Sans" font-size="13" fill="#223">TQ</text><circle cx="18" cy="18" r="4.2" fill="#f0e040" stroke="#c8b020" stroke-width=".8"/><path d="M16.5 22h3v2h-3z" fill="#bbb"/></svg>
<svg class="a" style="left:959.0px;top:161.0px" width="22" height="22" viewBox="0 0 24 24"><g fill="#58a888" stroke="#307058"><circle cx="12" cy="4" r="3"/><circle cx="5" cy="11" r="3"/><circle cx="19" cy="11" r="3"/><circle cx="12" cy="18" r="3"/></g><circle cx="18" cy="18" r="4.2" fill="#f0e040" stroke="#c8b020" stroke-width=".8"/><path d="M16.5 22h3v2h-3z" fill="#bbb"/></svg>
<svg class="a" style="left:994.0px;top:161.0px" width="22" height="22" viewBox="0 0 24 24"><g stroke="#222" stroke-width="2.6" stroke-linecap="round"><path d="M12 1.5v21M1.5 12h21M4.5 4.5l15 15M19.5 4.5l-15 15"/></g><circle cx="12" cy="12" r="6.5" fill="#d8e020" stroke="#222" stroke-width="1.4"/><circle cx="10.5" cy="10.5" r="2" fill="#f4f890"/><circle cx="18" cy="18" r="4.2" fill="#f0e040" stroke="#c8b020" stroke-width=".8"/><path d="M16.5 22h3v2h-3z" fill="#bbb"/></svg>
<svg class="a" style="left:1028.0px;top:161.0px" width="22" height="22" viewBox="0 0 24 24"><path d="M12 12c-2-4-8-6-9-2s4 5 9 2c-4 2-5 9-1 10s5-5 1-10c4 2 10 0 10-4s-7-3-10 4c1-4-2-9-5-8s1 6 5 8z" fill="#fff" stroke="#222" stroke-width="1.4"/><circle cx="12" cy="12" r="1.5" fill="#111"/><circle cx="18" cy="18" r="4.2" fill="#f0e040" stroke="#c8b020" stroke-width=".8"/><path d="M16.5 22h3v2h-3z" fill="#bbb"/></svg>
<svg class="a" style="left:1072.0px;top:161.0px" width="22" height="22" viewBox="0 0 24 24"><rect x="2" y="2" width="20" height="20" fill="#f4a0a8" stroke="#b04050" stroke-width="1.5"/><path d="M12 2V22M2 11H12" stroke="#b04050" stroke-width="1.3"/></svg>
<svg class="a" style="left:1107.0px;top:161.0px" width="22" height="22" viewBox="0 0 24 24"><text x="1" y="21" font-size="11" fill="#333" font-family="Liberation Sans">1</text><text x="7" y="16" font-size="12" fill="#333" font-family="Liberation Sans">2</text><text x="14" y="11" font-size="12" fill="#333" font-family="Liberation Sans">3</text></svg>
<svg class="a" style="left:1142.0px;top:161.0px" width="22" height="22" viewBox="0 0 24 24"><path d="M3 8L8 4L8 20L3 22Z" fill="#f0a0e8" stroke="#402040" stroke-width="1.5"/><path d="M9 6L14 2L19 3L19 18L14 22L9 21Z" fill="#f0a0e8" stroke="#402040" stroke-width="1.5"/><circle cx="18" cy="18" r="4.2" fill="#f0e040" stroke="#c8b020" stroke-width=".8"/><path d="M16.5 22h3v2h-3z" fill="#bbb"/></svg>
<svg class="a" style="left:1268.0px;top:161.0px" width="22" height="22" viewBox="0 0 24 24"><path d="M1 5h14v11H1z" fill="#111"/><path d="M15 9l7-4v12l-7-4z" fill="#111"/><path d="M5 16l-3 6M10 16l3 6" stroke="#111" stroke-width="2.4"/></svg>
<div class="a sim" style="left:1183.4px;top:163px;color:#1a2430"><span class="c"><i style="transform:scaleX(0.72)">L</i></span><span class="c"><i style="transform:scaleX(0.72)">B</i></span><span class="c"><i style="transform:scaleX(0.72)">L</i></span></div>
<div class="a sim" style="left:1220.4px;top:163px;color:#1a2430"><span class="c"><i style="transform:scaleX(0.66)">C</i></span><span class="c"><i style="transform:scaleX(0.66)">A</i></span><span class="c"><i style="transform:scaleX(0.66)">D</i></span></div>
<svg class="a" style="left:343.0px;top:203.0px" width="24" height="24" viewBox="0 0 24 24"><g fill="#8e8e8e"><path d="M12 0l4 5H8zM12 24l4-5H8zM0 12l5-4v8zM24 12l-5-4v8z"/><rect x="7" y="7" width="10" height="10"/></g></svg>
<svg class="a" style="left:382.0px;top:203.0px" width="24" height="24" viewBox="0 0 24 24"><path d="M5 6a9.5 9.5 0 1 0 7-4" stroke="#8a8a8a" stroke-width="2.6" fill="none"/><path d="M1 1l8 1-4 6z" fill="#8a8a8a"/><rect x="6" y="7" width="11" height="11" fill="#8a8a8a"/></svg>
<svg class="a" style="left:343.0px;top:241.0px" width="24" height="24" viewBox="0 0 24 24"><path d="M2 8c0-6 8-6 8 0v8c0 4-8 4-8 0zM14 8c0-6 8-6 8 0v8c0 4-8 4-8 0z" fill="#8a8a8a"/><path d="M5 22c4 2 10 2 14-1l-3-2" stroke="#8a8a8a" stroke-width="2.4" fill="none"/></svg>
<svg class="a" style="left:343.0px;top:282.0px" width="24" height="24" viewBox="0 0 24 24"><path d="M2 8L8 2h14v13l-6 7H2Z" fill="#8aa8e8" stroke="#4868c0" stroke-width="1.6"/><path d="M2 8h14v14M16 8l6-6M2 15h14M9 8v14M8 2L2 8M15 2l-6 6" stroke="#fff" stroke-width="1.2" fill="none"/></svg>
<svg class="a" style="left:382.0px;top:282.0px" width="24" height="24" viewBox="0 0 24 24"><path d="M2 12h20" stroke="#888" stroke-width="2"/><g fill="none" stroke="#888" stroke-width="1.3"><path d="M4 4h16v5H4zM9 4v5M15 4v5M4 15h16v5H4zM9 15v5M15 15v5"/></g></svg>
<svg class="a" style="left:343.0px;top:326.0px" width="24" height="24" viewBox="0 0 24 24"><path d="M1 14L7 8h16l-6 6Z" fill="#d9905a" stroke="#8a5530" stroke-width="1.2"/><path d="M1 14h16v4H1z" fill="#c87848" stroke="#8a5530" stroke-width="1.2"/><path d="M17 14l6-6v4l-6 6z" fill="#a86030" stroke="#8a5530" stroke-width="1.2"/></svg>
<svg class="a" style="left:382.0px;top:326.0px" width="24" height="24" viewBox="0 0 24 24"><path d="M1 14L7 8h16l-6 6Z" fill="#d9905a" stroke="#8a5530" stroke-width="1.2"/><path d="M9 12.5l2-2h4l-2 2z" fill="#f4e8dc" stroke="#8a5530" stroke-width=".8"/><path d="M1 14h16v4H1z" fill="#c87848" stroke="#8a5530" stroke-width="1.2"/><path d="M17 14l6-6v4l-6 6z" fill="#a86030" stroke="#8a5530" stroke-width="1.2"/></svg>
<svg class="a" style="left:343.0px;top:359.0px" width="24" height="24" viewBox="0 0 24 24"><path d="M5 7l5-3h7v14l-5 4H5Z" fill="#d9905a" stroke="#8a5530" stroke-width="1.2"/><path d="M5 7h7v15M12 7l5-3" stroke="#8a5530" fill="none" stroke-width="1.2"/><path d="M12 7l5-3v14l-5 4z" fill="#c07040"/></svg>
<svg class="a" style="left:382.0px;top:359.0px" width="24" height="24" viewBox="0 0 24 24"><path d="M5 7l5-3h7v14l-5 4H5Z" fill="#d9905a" stroke="#8a5530" stroke-width="1.2"/><path d="M5 7h7v15M12 7l5-3" stroke="#8a5530" fill="none" stroke-width="1.2"/><path d="M12 7l5-3v14l-5 4z" fill="#c07040"/><path d="M13.5 8l2-1.5v10l-2 1.5z" fill="#f4e8dc" stroke="#8a5530" stroke-width=".8"/></svg>
<svg class="a" style="left:343.0px;top:395.0px" width="24" height="24" viewBox="0 0 24 24"><path d="M3 8L8 3h13v13l-5 5H3Z" fill="#d9905a" stroke="#8a5530" stroke-width="1.3"/><path d="M3 8h13v13M16 8l5-5" stroke="#8a5530" fill="none" stroke-width="1.3"/></svg>
<svg class="a" style="left:382.0px;top:395.0px" width="24" height="24" viewBox="0 0 24 24"><rect x="3" y="3" width="18" height="18" fill="#d9905a" stroke="#8a5530" stroke-width="1.3"/><rect x="8" y="8" width="8" height="8" fill="#f4e8dc" stroke="#8a5530"/></svg>
<svg class="a" style="left:343.0px;top:431.0px" width="24" height="24" viewBox="0 0 24 24"><path d="M4 3l14-2v18l-14 3Z" fill="#fff" stroke="#111" stroke-width="1.6"/><path d="M7 7h8M7 10h8M7 13h8M7 16h8" stroke="#111" stroke-width="1.3"/></svg>
<svg class="a" style="left:382.0px;top:431.0px" width="24" height="24" viewBox="0 0 24 24"><path d="M2 12L7 7h15v9l-5 5H2Z" fill="#d9905a" stroke="#8a5530" stroke-width="1.3"/><path d="M5 11l3-2h10l-3 2z" fill="#a86030"/><path d="M2 12h15v9M17 12l5-5" stroke="#8a5530" fill="none" stroke-width="1.3"/></svg>
<svg class="a" style="left:343.0px;top:471.0px" width="24" height="24" viewBox="0 0 24 24"><rect x="2" y="2" width="20" height="20" fill="#f4a0a8" stroke="#b04050" stroke-width="1.5"/><path d="M12 2V22M2 11H12" stroke="#b04050" stroke-width="1.3"/></svg>
<svg class="a" style="left:382.0px;top:471.0px" width="24" height="24" viewBox="0 0 24 24"><rect x="2" y="3" width="20" height="17" fill="#9cd0ee" stroke="#60a8d8"/><text x="4" y="17" font-family="Liberation Sans" font-size="12" fill="#334">T0</text></svg>
<svg class="a" style="left:343.0px;top:506.0px" width="24" height="24" viewBox="0 0 24 24"><g fill="#58a888" stroke="#307058"><circle cx="12" cy="4" r="3"/><circle cx="5" cy="11" r="3"/><circle cx="19" cy="11" r="3"/><circle cx="12" cy="18" r="3"/></g></svg>
<svg class="a" style="left:382.0px;top:506.0px" width="24" height="24" viewBox="0 0 24 24"><circle cx="8" cy="9" r="3" fill="#58a888" stroke="#307058"/></svg>
<svg class="a" style="left:343.0px;top:543.0px" width="24" height="24" viewBox="0 0 24 24"><path d="M3 8L8 4L8 20L3 22Z" fill="#f0a0e8" stroke="#402040" stroke-width="1.5"/><path d="M9 6L14 2L19 3L19 18L14 22L9 21Z" fill="#f0a0e8" stroke="#402040" stroke-width="1.5"/></svg>
<svg class="a" style="left:382.0px;top:543.0px" width="24" height="24" viewBox="0 0 24 24"><g stroke="#222" stroke-width="2.6" stroke-linecap="round"><path d="M12 1.5v21M1.5 12h21M4.5 4.5l15 15M19.5 4.5l-15 15"/></g><circle cx="12" cy="12" r="6.5" fill="#d8e020" stroke="#222" stroke-width="1.4"/><circle cx="10.5" cy="10.5" r="2" fill="#f4f890"/></svg>
<svg class="a" style="left:343.0px;top:579.0px" width="24" height="24" viewBox="0 0 24 24"><path d="M5 8L10 4h9v14l-5 4H5Z" fill="#f0a0e8" stroke="#402040" stroke-width="1.5"/><path d="M5 8h9v14M14 8l5-4" stroke="#402040" fill="none" stroke-width="1.3"/></svg>
<svg class="a" style="left:343.0px;top:619.0px" width="24" height="24" viewBox="0 0 24 24"><text x="4" y="19" font-family="Liberation Sans" font-size="19" fill="#222">N</text><circle cx="11" cy="22.5" r="1.6" fill="#f0a040"/></svg>
<svg class="a" style="left:382.0px;top:619.0px" width="24" height="24" viewBox="0 0 24 24"><text x="4" y="19" font-family="Liberation Sans" font-size="19" fill="#222">D</text><path d="M3 22.5h16" stroke="#f0a040" stroke-width="2"/></svg>
<svg class="a" style="left:343.0px;top:661.0px" width="24" height="24" viewBox="0 0 24 24"><path d="M6 10l8-7 8 8-8 9z" fill="#c8c8b0" stroke="#555" stroke-width="1.3"/><path d="M2 14c0-4 4-6 7-4l-3 3v8H3z" fill="#a02020"/></svg>
<svg class="a" style="left:382.0px;top:661.0px" width="24" height="24" viewBox="0 0 24 24"><path d="M4 21l11-11 2 2L6 23z" fill="#aaa" stroke="#333" stroke-width="1.3"/><path d="M15 6l4-4 3 3-4 4z" fill="#222"/></svg>
<svg class="a" style="left:343.0px;top:697.0px" width="24" height="24" viewBox="0 0 24 24"><rect x="2" y="7" width="21" height="10" fill="#fff8d0" stroke="#222" stroke-width="1.6"/><path d="M6 7v5M10 7v4M14 7v5M18 7v4" stroke="#222" stroke-width="1.2"/></svg>
<svg class="a" style="left:343.0px;top:736.0px" width="24" height="24" viewBox="0 0 24 24"><rect x="3" y="3" width="8" height="8" fill="#aaa" rx="1"/><rect x="3" y="13" width="8" height="8" fill="#aaa" rx="1"/><path d="M13 7h6M13 17h6" stroke="#999" stroke-width="2"/></svg>
<div class="a" style="left:339px;top:194px;width:77px;height:1.5px;background:#b0b0b0"></div>
<div class="a" style="left:339px;top:274px;width:77px;height:1.5px;background:#b0b0b0"></div>
<div class="a" style="left:339px;top:314px;width:77px;height:1.5px;background:#b0b0b0"></div>
<div class="a" style="left:339px;top:463px;width:77px;height:1.5px;background:#b0b0b0"></div>
<div class="a" style="left:339px;top:612px;width:77px;height:1.5px;background:#b0b0b0"></div>
<div class="a" style="left:339px;top:652px;width:77px;height:1.5px;background:#b0b0b0"></div>
<div class="a" style="left:339px;top:729px;width:77px;height:1.5px;background:#b0b0b0"></div>
<div id="view" class="a">
<svg width="1717" height="1076" style="position:absolute;left:0;top:0">
 <path d="M536.2 145.8L558.6 287.3M574.1 146.6L592.0 287.5M611.9 147.3L625.2 287.8M649.5 148.1L658.4 288.0M686.8 148.9L691.3 288.3M724.0 149.7L724.2 288.5M761.0 150.4L756.9 288.8M797.8 151.2L789.4 289.1M834.4 151.9L821.8 289.3M870.8 152.7L854.0 289.6M907.0 153.4L886.2 289.8M943.1 154.2L918.1 290.1M979.0 154.9L950.0 290.3M1014.6 155.7L981.7 290.5M1050.1 156.4L1013.2 290.8M1085.5 157.1L1044.6 291.0M1120.6 157.8L1075.9 291.3M1155.6 158.6L1107.1 291.5M1190.4 159.3L1138.1 291.8M502.5 168.7L539.9 169.4L577.1 170.1L614.1 170.8L650.9 171.4L687.6 172.1L724.0 172.8L760.3 173.5L796.4 174.2L832.3 174.8L868.0 175.5L903.6 176.2L938.9 176.8L974.1 177.5L1009.1 178.1L1044.0 178.8L1078.7 179.4L1113.2 180.1L1147.5 180.7L1181.7 181.4L1215.7 182.0M507.0 192.3L543.6 192.9L580.1 193.6L616.3 194.2L652.4 194.8L688.3 195.4L724.1 196.0L759.6 196.6L795.0 197.1L830.2 197.7L865.2 198.3L900.1 198.9L934.8 199.5L969.3 200.0L1003.7 200.6L1037.8 201.2L1071.9 201.8L1105.7 202.3L1139.4 202.9L1173.0 203.4L1206.3 204.0M511.5 216.0L547.4 216.5L583.1 217.0L618.6 217.6L653.9 218.1L689.1 218.6L724.1 219.1L758.9 219.6L793.6 220.1L828.1 220.6L862.4 221.1L896.6 221.6L930.6 222.1L964.5 222.6L998.2 223.1L1031.7 223.6L1065.1 224.1L1098.3 224.6L1131.3 225.0L1164.2 225.5L1197.0 226.0M516.0 239.7L551.1 240.1L586.0 240.5L620.8 241.0L655.4 241.4L689.8 241.8L724.1 242.3L758.2 242.7L792.2 243.1L826.0 243.5L859.6 243.9L893.1 244.3L926.5 244.8L959.6 245.2L992.7 245.6L1025.5 246.0L1058.3 246.4L1090.8 246.8L1123.3 247.2L1155.5 247.6L1187.7 248.0M520.5 263.3L554.8 263.7L589.0 264.0L623.0 264.4L656.9 264.7L690.6 265.1L724.1 265.4L757.5 265.7L790.8 266.1L823.9 266.4L856.8 266.7L889.6 267.1L922.3 267.4L954.8 267.7L987.2 268.1L1019.4 268.4L1051.5 268.7L1083.4 269.0L1115.2 269.4L1146.8 269.7L1178.3 270.0M478.9 887.5L516.1 956.4M529.5 885.9L558.9 954.8M579.7 884.4L601.5 953.3M629.5 882.9L643.8 951.7M679.1 881.4L685.9 950.2M728.2 879.9L727.8 948.6M777.1 878.4L769.4 947.1M825.6 876.9L810.8 945.6M873.8 875.5L851.9 944.1M921.6 874.0L892.9 942.6M969.2 872.6L933.6 941.1M1016.4 871.1L974.0 939.6M1063.3 869.7L1014.3 938.1M1109.9 868.3L1054.3 936.7M1156.1 866.9L1094.2 935.2M1202.1 865.5L1133.8 933.7M1247.8 864.1L1173.1 932.3M1293.2 862.7L1212.3 930.9M1338.2 861.4L1251.3 929.4M435.5 900.5L485.1 898.9L534.4 897.4L583.3 895.9L631.9 894.4L680.2 892.8L728.2 891.3L775.8 889.9L823.1 888.4L870.1 886.9L916.8 885.4L963.2 884.0L1009.3 882.5L1055.1 881.1L1100.6 879.7L1145.8 878.3L1190.7 876.9L1235.3 875.5L1279.7 874.1L1323.7 872.7L1367.5 871.3M443.0 912.0L491.3 910.4L539.3 908.9L586.9 907.4L634.3 905.8L681.3 904.3L728.1 902.8L774.5 901.3L820.6 899.8L866.5 898.3L912.0 896.9L957.3 895.4L1002.3 894.0L1047.0 892.5L1091.4 891.1L1135.5 889.7L1179.3 888.2L1222.9 886.8L1266.2 885.4L1309.2 884.0L1352.0 882.7M450.5 923.5L497.5 921.9L544.2 920.4L590.6 918.8L636.7 917.3L682.5 915.8L728.0 914.3L773.2 912.8L818.2 911.3L862.8 909.8L907.2 908.3L951.4 906.8L995.2 905.4L1038.8 903.9L1082.1 902.5L1125.1 901.0L1167.9 899.6L1210.5 898.2L1252.7 896.8L1294.7 895.4L1336.5 894.0M458.0 935.0L503.7 933.4L549.1 931.9L594.2 930.3L639.0 928.8L683.6 927.2L727.9 925.7L771.9 924.2L815.7 922.7L859.2 921.2L902.5 919.7L945.4 918.2L988.2 916.8L1030.6 915.3L1072.8 913.9L1114.8 912.4L1156.5 911.0L1198.0 909.6L1239.3 908.1L1280.2 906.7L1321.0 905.3M465.5 946.5L509.9 944.9L554.0 943.4L597.8 941.8L641.4 940.3L684.8 938.7L727.8 937.2L770.7 935.7L813.2 934.2L855.6 932.6L897.7 931.2L939.5 929.7L981.1 928.2L1022.5 926.7L1063.6 925.3L1104.5 923.8L1145.1 922.4L1185.6 920.9L1225.8 919.5L1265.8 918.1L1305.5 916.7M495.3 173.3L522.9 313.5M492.6 202.4L520.8 340.6M489.8 232.2L518.7 368.3M486.9 262.8L516.5 396.7M484.0 294.2L514.3 425.7M480.9 326.4L512.0 455.4M477.8 359.5L509.6 485.8M474.6 393.6L507.2 516.9M471.3 428.5L504.7 548.7M467.9 464.5L502.2 581.4M464.5 501.5L499.6 614.8M460.9 539.5L496.9 649.1M457.2 578.7L494.2 684.3M453.4 619.0L491.4 720.4M449.5 660.6L488.5 757.4M445.5 703.5L485.6 795.4M441.3 747.7L482.6 834.4M437.0 793.3L479.5 874.5M432.6 840.4L476.3 915.7M502.5 168.7L499.9 196.7L497.3 225.4L494.6 254.9L491.8 285.1L489.0 316.1L486.1 347.9L483.1 380.6L480.0 414.1L476.9 448.6L473.6 484.0L470.3 520.4L466.9 557.8L463.4 596.3L459.7 635.9L456.0 676.7L452.1 718.8L448.2 762.1L444.1 806.8L439.9 852.9L435.5 900.5M507.0 192.3L504.5 220.1L502.0 248.5L499.4 277.6L496.8 307.4L494.1 338.0L491.3 369.4L488.4 401.6L485.5 434.7L482.5 468.6L479.4 503.4L476.2 539.2L472.9 576.1L469.5 613.9L466.1 652.8L462.5 692.9L458.8 734.1L455.1 776.6L451.2 820.4L447.1 865.5L443.0 912.0M511.5 216.0L509.1 243.4L506.7 271.5L504.2 300.3L501.7 329.7L499.1 359.9L496.4 390.9L493.7 422.7L490.9 455.2L488.0 488.6L485.1 522.9L482.0 558.1L478.9 594.3L475.7 631.5L472.4 669.7L469.0 709.0L465.5 749.4L461.9 791.0L458.2 833.9L454.4 878.0L450.5 923.5M516.0 239.7L513.7 266.8L511.4 294.5L509.1 323.0L506.6 352.1L504.2 381.9L501.6 412.4L499.0 443.7L496.3 475.8L493.6 508.7L490.8 542.4L487.9 577.0L484.9 612.6L481.9 649.1L478.7 686.6L475.5 725.1L472.2 764.8L468.8 805.5L465.3 847.4L461.7 890.6L458.0 935.0M520.5 263.3L518.3 290.2L516.1 317.6L513.9 345.6L511.6 374.4L509.2 403.8L506.8 433.9L504.3 464.7L501.8 496.3L499.2 528.7L496.5 561.9L493.7 595.9L490.9 630.9L488.0 666.7L485.1 703.5L482.0 741.3L478.9 780.1L475.7 820.0L472.4 861.0L469.0 903.1L465.5 946.5M1231.1 187.1L1173.8 317.4M1237.4 214.8L1178.8 343.4M1243.8 243.3L1183.8 369.9M1250.4 272.4L1189.0 397.0M1257.1 302.2L1194.2 424.7M1264.0 332.8L1199.6 453.0M1271.1 364.2L1205.1 482.0M1278.4 396.4L1210.8 511.6M1285.8 429.5L1216.5 541.9M1293.5 463.4L1222.4 572.9M1301.3 498.2L1228.5 604.6M1309.4 534.0L1234.7 637.1M1317.7 570.8L1241.0 670.4M1326.3 608.6L1247.5 704.5M1335.0 647.5L1254.1 739.4M1344.1 687.6L1260.9 775.3M1353.4 728.8L1267.9 812.0M1363.0 771.2L1275.1 849.7M1372.8 814.9L1282.5 888.3M1215.7 182.0L1221.6 208.8L1227.6 236.3L1233.8 264.4L1240.1 293.1L1246.6 322.6L1253.3 352.9L1260.1 383.8L1267.1 415.6L1274.3 448.2L1281.6 481.6L1289.2 516.0L1297.0 551.2L1304.9 587.4L1313.1 624.6L1321.6 662.9L1330.2 702.2L1339.1 742.6L1348.3 784.3L1357.8 827.2L1367.5 871.3M1206.3 204.0L1212.0 230.5L1217.8 257.7L1223.8 285.5L1229.9 313.9L1236.1 343.0L1242.5 372.9L1249.1 403.5L1255.8 434.8L1262.7 466.9L1269.8 499.9L1277.1 533.7L1284.5 568.4L1292.1 604.0L1300.0 640.6L1308.1 678.2L1316.4 716.8L1324.9 756.5L1333.7 797.4L1342.7 839.4L1352.0 882.7M1197.0 226.0L1202.5 252.3L1208.1 279.1L1213.8 306.6L1219.7 334.7L1225.7 363.5L1231.8 392.9L1238.1 423.1L1244.6 454.0L1251.2 485.7L1258.0 518.1L1264.9 551.4L1272.0 585.6L1279.4 620.6L1286.9 656.6L1294.6 693.5L1302.5 731.4L1310.7 770.4L1319.0 810.4L1327.6 851.6L1336.5 894.0M1187.7 248.0L1192.9 274.0L1198.3 300.5L1203.8 327.7L1209.4 355.5L1215.2 383.9L1221.1 413.0L1227.1 442.7L1233.3 473.2L1239.6 504.4L1246.1 536.4L1252.8 569.2L1259.6 602.8L1266.6 637.2L1273.7 672.5L1281.1 708.8L1288.7 746.0L1296.4 784.3L1304.4 823.5L1312.6 863.9L1321.0 905.3M1178.3 270.0L1183.4 295.7L1188.5 322.0L1193.8 348.8L1199.2 376.2L1204.7 404.3L1210.4 433.0L1216.1 462.3L1222.0 492.4L1228.1 523.1L1234.3 554.6L1240.6 586.9L1247.1 619.9L1253.8 653.8L1260.6 688.5L1267.6 724.1L1274.8 760.6L1282.2 798.1L1289.7 836.6L1297.5 876.1L1305.5 916.7" stroke="#7a8198" stroke-width="1" fill="none" opacity="0.5"/>
 <path d="M558.6 287.3L516.1 956.4M592.0 287.5L558.9 954.8M625.2 287.8L601.5 953.3M658.4 288.0L643.8 951.7M691.3 288.3L685.9 950.2M724.2 288.5L727.8 948.6M756.9 288.8L769.4 947.1M789.4 289.1L810.8 945.6M821.8 289.3L851.9 944.1M854.0 289.6L892.9 942.6M886.2 289.8L933.6 941.1M918.1 290.1L974.0 939.6M950.0 290.3L1014.3 938.1M981.7 290.5L1054.3 936.7M1013.2 290.8L1094.2 935.2M1044.6 291.0L1133.8 933.7M1075.9 291.3L1173.1 932.3M1107.1 291.5L1212.3 930.9M1138.1 291.8L1251.3 929.4M522.9 313.5L1173.8 317.4M520.8 340.6L1178.8 343.4M518.7 368.3L1183.8 369.9M516.5 396.7L1189.0 397.0M514.3 425.7L1194.2 424.7M512.0 455.4L1199.6 453.0M509.6 485.8L1205.1 482.0M507.2 516.9L1210.8 511.6M504.7 548.7L1216.5 541.9M502.2 581.4L1222.4 572.9M499.6 614.8L1228.5 604.6M496.9 649.1L1234.7 637.1M494.2 684.3L1241.0 670.4M491.4 720.4L1247.5 704.5M488.5 757.4L1254.1 739.4M485.6 795.4L1260.9 775.3M482.6 834.4L1267.9 812.0M479.5 874.5L1275.1 849.7M476.3 915.7L1282.5 888.3" stroke="#7a8198" stroke-width="1.1" fill="none" opacity="0.5"/>
 <path d="M498 145L1225 160M525 287L1169 292M498 145L525 287M1225 160L1169 292M498 145L428 889M525 287L473 958M1225 160L1383 860M1169 292L1290 928M428 889L1383 860M473 958L1290 928M428 889L473 958M1383 860L1290 928" stroke="#fdfdfd" stroke-width="2.6" fill="none" stroke-linejoin="round"/>
</svg>
</div>

<!-- obstruction -->
<svg class="a" style="left:1005px;top:660px" width="80" height="155" viewBox="1005 660 80 155">
 <defs><linearGradient id="og" x1="0" y1="0" x2="0" y2="1"><stop offset="0" stop-color="#b69850"/><stop offset="1" stop-color="#c49a38"/></linearGradient></defs>
 <path d="M1059 667L1071 805L1069 806L1057 704Z" fill="#3a3020" stroke="#111" stroke-width="1.5"/>
 <path d="M1016 704L1058 704L1070 805L1031 805Z" fill="url(#og)" stroke="#111" stroke-width="2"/>
 <path d="M1016 668L1059 667L1058 704L1016 704Z" fill="#f8d466" stroke="#111" stroke-width="2"/>
</svg>
<!-- mouse cursor -->
<svg class="a" style="left:1236px;top:819px" width="22" height="30" viewBox="0 0 22 30">
 <path d="M2 2V24L7.5 19L11.5 27.5L15 26L11 17.5H18.5Z" fill="#fff" stroke="#222" stroke-width="1.2"/>
</svg>
<!-- minimap -->
<div class="a" style="left:417px;top:1107px;width:161px;height:161px;background:linear-gradient(90deg,#1a2236 0%,#2c3450 35%,#3c4460 65%,#4e5470 100%);border:1.5px solid #181c28"></div>
<svg class="a" style="left:417px;top:1107px" width="161" height="161" viewBox="0 0 161 161">
 <path d="M47.5 124V35H117.5L129 98H47.5M47.5 71.5H104.5L117.5 36M104.5 71.5L109 122M109 122L129 98" stroke="#9096b4" stroke-width="1.3" fill="none"/>
 <path d="M50 124V73M50 124H109" stroke="#f0f020" stroke-width="2" fill="none"/>
 <path d="M50 70l-3 8h6z" fill="#f0f020"/><circle cx="101.5" cy="123.5" r="3" fill="#f0f020"/><circle cx="46.5" cy="105" r="3.2" fill="#f0f020"/>
 <text x="51" y="68" font-family="Liberation Sans" font-size="16" fill="#e4e6f0">Y</text>
 <text x="45" y="94" font-family="Liberation Sans" font-size="15" fill="#d8d8d0">Z</text>
 <text x="118" y="122" font-family="Liberation Sans" font-size="16" fill="#e4e6f0">X</text>
</svg>
<!-- bottom tabs -->
<div class="a" style="left:338px;top:1299px;width:1796px;height:6px;background:#fdfdfd"></div>
<div class="a" style="left:338px;top:1305px;width:1796px;height:29px;background:#f0f0f0;border-top:1px solid #dcdcdc"></div>
<div class="a" style="left:338px;top:1299px;width:79px;height:35px;background:#fcfcfc"></div>
<div class="a" style="left:417px;top:1305px;width:79px;height:29px;background:#ececec;border-left:1px solid #d8d8d8;border-top:1px solid #d8d8d8;border-right:1px solid #d8d8d8"></div>
<div class="a" style="left:496px;top:1305px;width:112px;height:29px;background:#ececec;border-top:1px solid #d8d8d8;border-right:1px solid #d8d8d8"></div>



<div class="a sim" style="left:343.8px;top:1313px;color:#141414"><span class="c"><i style="transform:scaleX(0.82)">3</i></span><span class="c"><i style="transform:scaleX(0.66)">D</i></span><span class="c">&nbsp;</span><span class="c"><i style="transform:scaleX(0.66)">V</i></span><span class="c"><i style="transform:scaleX(1.00)">i</i></span><span class="c"><i style="transform:scaleX(0.98)">e</i></span><span class="c"><i style="transform:scaleX(0.73)">w</i></span></div>
<div class="a sim" style="left:424.9px;top:1310.7px;color:#141414"><span class="c"><i style="transform:scaleX(0.82)">2</i></span><span class="c"><i style="transform:scaleX(0.66)">D</i></span><span class="c">&nbsp;</span><span class="c"><i style="transform:scaleX(0.66)">V</i></span><span class="c"><i style="transform:scaleX(1.00)">i</i></span><span class="c"><i style="transform:scaleX(0.98)">e</i></span><span class="c"><i style="transform:scaleX(0.73)">w</i></span></div>
<div class="a sim" style="left:505.6px;top:1310.7px;color:#141414"><span class="c"><i style="transform:scaleX(0.66)">R</i></span><span class="c"><i style="transform:scaleX(0.98)">e</i></span><span class="c"><i style="transform:scaleX(0.98)">c</i></span><span class="c"><i style="transform:scaleX(0.87)">o</i></span><span class="c"><i style="transform:scaleX(0.98)">r</i></span><span class="c"><i style="transform:scaleX(0.78)">d</i></span><span class="c">&nbsp;</span><span class="c"><i style="transform:scaleX(0.66)">V</i></span><span class="c"><i style="transform:scaleX(1.00)">i</i></span><span class="c"><i style="transform:scaleX(0.98)">e</i></span><span class="c"><i style="transform:scaleX(0.73)">w</i></span></div>
<!-- left panel header & footer -->
<svg class="a" style="left:2px;top:117px" width="40" height="16" viewBox="0 0 40 16">
 <rect x="1.5" y="1.5" width="12" height="12" fill="#f4f4f4" stroke="#888"/><path d="M4 7.5h7" stroke="#555" stroke-width="1.3"/>
 <rect x="23.5" y="1.5" width="12" height="12" fill="#f4f4f4" stroke="#888"/><path d="M26 7.5h7M29.5 4v7" stroke="#555" stroke-width="1.3"/>
</svg>
<div class="a" style="left:0;top:1312px;width:322px;height:22px;background:#e8e8e8"></div>
<div class="a" style="left:322px;top:1300px;width:2px;height:34px;background:#a8a8a8"></div>
<svg class="a" style="left:303px;top:1318px" width="14" height="14" viewBox="0 0 14 14"><path d="M3 2l6 5-6 5" stroke="#555" stroke-width="2.2" fill="none"/></svg>
<!-- timer -->
<div class="a" style="left:1710px;top:31px;width:73px;height:73px;border-radius:50%;background:#e8f8fa;box-shadow:0 0 3px rgba(0,0,0,.15)"></div>
<div class="a" style="left:1713.5px;top:34px;width:66px;height:66px;border-radius:50%;background:radial-gradient(circle at 50% 70%,#8ce4fa 0%,#78d4f6 60%,#5cb8e8 100%);border:1px solid #3a98c8"></div>
<div class="a" style="left:1735px;top:35px;width:24px;height:5px;border-radius:50%;background:#2f7ee0;opacity:.85"></div>
<div class="a" style="left:1752px;top:43px;width:14px;height:8px;border-radius:50%;border-top:2px solid rgba(255,255,255,.55);transform:rotate(25deg)"></div>
<div class="a" style="left:1713px;top:55px;width:67px;text-align:center;font-size:19.5px;color:#f4fcff">03:11</div>
</body></html>
